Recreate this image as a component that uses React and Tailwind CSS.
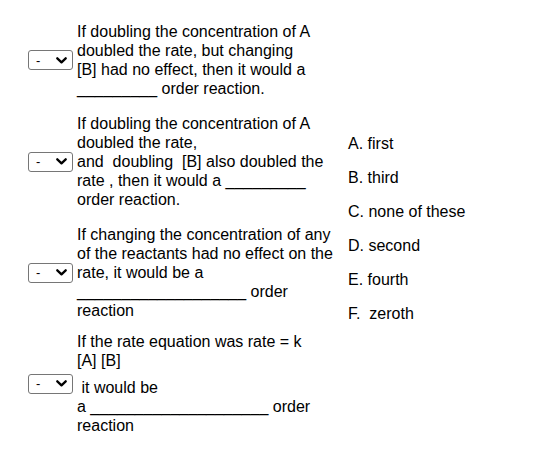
import React from "react";

const answers = ["A. first", "B. third", "C. none of these", "D. second", "E. fourth", "F.  zeroth"];

// Looks like a native <select> showing its empty "-" choice
const Picker = () => (
    <div className="w-[45px] h-[20px] border border-[#767676] rounded-[3px] bg-white flex items-center justify-between pl-[7px] pr-[5px] text-[13px] leading-none text-black shrink-0">
        <span>-</span>
        <svg width="11" height="7" viewBox="0 0 11 7" fill="none">
            <path d="M1.3 1.3 L5.5 5.3 L9.7 1.3" stroke="#000" strokeWidth="2.3" strokeLinecap="round" strokeLinejoin="round" />
        </svg>
    </div>
);

const Row = ({ children, className = "py-2" }) => (
    <div className={`flex items-center ${className}`}>
        <div className="w-[49px] shrink-0 flex items-center">
            <Picker />
        </div>
        <div className="w-[262px]">{children}</div>
    </div>
);

export default function App() {
    return (
        <div
            className="w-[548px] h-[462px] bg-white text-black text-[16px] leading-[19px] pl-[28px] pt-[14px]"
            style={{ fontFamily: '"Liberation Sans", Arial, sans-serif' }}
        >
            <div className="flex items-center">
                {/* Statements with a dropdown each */}
                <div className="flex flex-col">
                    <Row>
                        If doubling the concentration of A doubled the rate, but changing
                        <br />
                        [B] had no effect, then it would a _________ order reaction.
                    </Row>
                    <Row>
                        If doubling the concentration of A doubled the rate,
                        <br />
                        and&nbsp; doubling&nbsp; [B] also doubled the rate , then it would a _________ order reaction.
                    </Row>
                    <Row className="pt-2 pb-[6px]">
                        If changing the concentration of any of the reactants had no effect on the rate, it would be a ___________________ order reaction
                    </Row>
                    <Row className="pt-[6px] pb-2">
                        If the rate equation was rate = k
                        <br />
                        [A] [B]
                        <div className="mt-[8px]">&nbsp;it would be</div>
                        a ____________________ order reaction
                    </Row>
                </div>

                {/* Answer choices */}
                <div className="flex flex-col gap-[15px] ml-[9px]">
                    {answers.map((a) => (
                        <div key={a} className="whitespace-pre">{a}</div>
                    ))}
                </div>
            </div>
        </div>
    );
}
